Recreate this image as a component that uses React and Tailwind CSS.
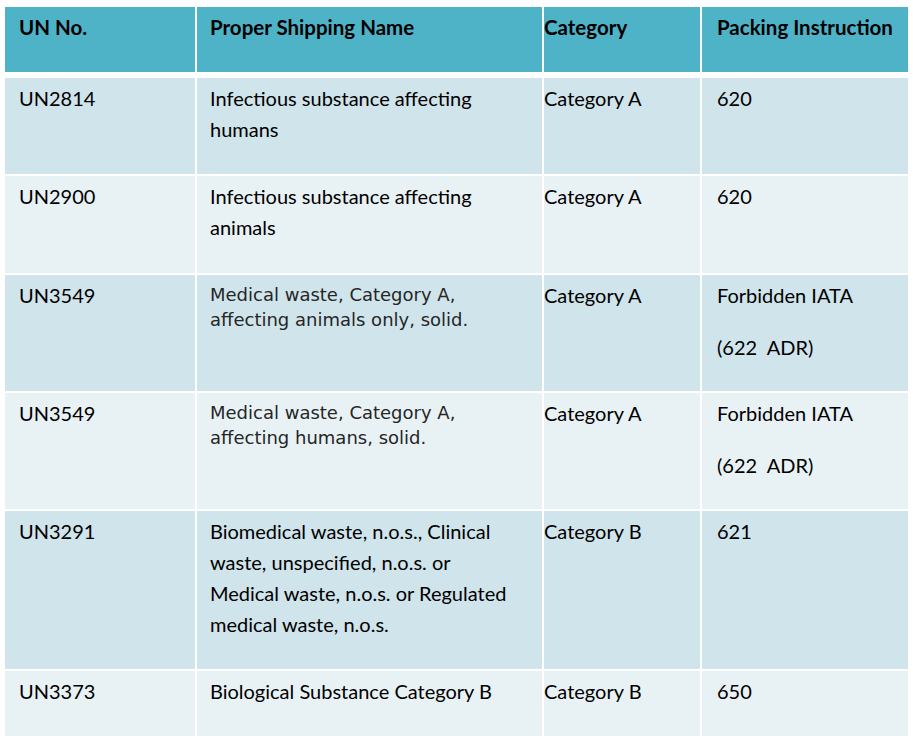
import React from 'react';

const rows = [
    { un: 'UN2814', name: ['Infectious substance affecting', 'humans'], cat: 'Category A', pi: ['620'], h: 'h-[96px]', bg: 'bg-[#d0e4eb]' },
    { un: 'UN2900', name: ['Infectious substance affecting', 'animals'], cat: 'Category A', pi: ['620'], h: 'h-[97px]', bg: 'bg-[#e8f2f5]' },
    { un: 'UN3549', name: ['Medical waste, Category A,', 'affecting animals only, solid.'], alt: true, cat: 'Category A', pi: ['Forbidden IATA', '(622  ADR)'], h: 'h-[116px]', bg: 'bg-[#d0e4eb]' },
    { un: 'UN3549', name: ['Medical waste, Category A,', 'affecting humans, solid.'], alt: true, cat: 'Category A', pi: ['Forbidden IATA', '(622  ADR)'], h: 'h-[116px]', bg: 'bg-[#e8f2f5]' },
    { un: 'UN3291', name: ['Biomedical waste, n.o.s., Clinical', 'waste, unspecified, n.o.s. or', 'Medical waste, n.o.s. or Regulated', 'medical waste, n.o.s.'], cat: 'Category B', pi: ['621'], h: 'h-[158px]', bg: 'bg-[#d0e4eb]' },
    { un: 'UN3373', name: ['Biological Substance Category B'], cat: 'Category B', pi: ['650'], h: 'h-[65px]', bg: 'bg-[#e8f2f5]' },
];

const grid = 'grid grid-cols-[190px_345px_156px_206px] gap-x-[2px]';

const App = () => {
    return (
        <div className="w-[913px] h-[741px] bg-white pt-[7px] pl-[5px] text-black font-['Lato',sans-serif] text-[20px] leading-[31px]">
            <div className={`${grid} h-[65px] mb-[6px] font-bold text-[20.5px]`}>
                <div className="bg-[#4fb3c8] pl-[14px] pt-[5px]">UN No.</div>
                <div className="bg-[#4fb3c8] pl-[13px] pt-[5px]">Proper Shipping Name</div>
                <div className="bg-[#4fb3c8] pt-[5px]">Category</div>
                <div className="bg-[#4fb3c8] pl-[15px] pt-[5px]">Packing Instruction</div>
            </div>
            {rows.map((r, i) => (
                <div key={i} className={`${grid} ${r.h} mb-[2px]`}>
                    <div className={`${r.bg} pl-[14px] pt-[5px]`}>{r.un}</div>
                    <div className={`${r.bg} pl-[13px] pt-[5px]`}>
                        {r.alt ? (
                            <div className="font-['DejaVu_Sans',sans-serif] text-[18px] leading-[24.5px] text-[#262626] pt-[3px]">
                                {r.name.map((l, j) => <div key={j}>{l}</div>)}
                            </div>
                        ) : (
                            r.name.map((l, j) => <div key={j}>{l}</div>)
                        )}
                    </div>
                    <div className={`${r.bg} pt-[5px]`}>{r.cat}</div>
                    <div className={`${r.bg} pl-[15px] pt-[5px]`}>
                        {r.pi.map((l, j) => (
                            <div key={j} className={`whitespace-pre ${j > 0 ? 'mt-[21px]' : ''}`}>{l}</div>
                        ))}
                    </div>
                </div>
            ))}
        </div>
    );
};

export default App;
